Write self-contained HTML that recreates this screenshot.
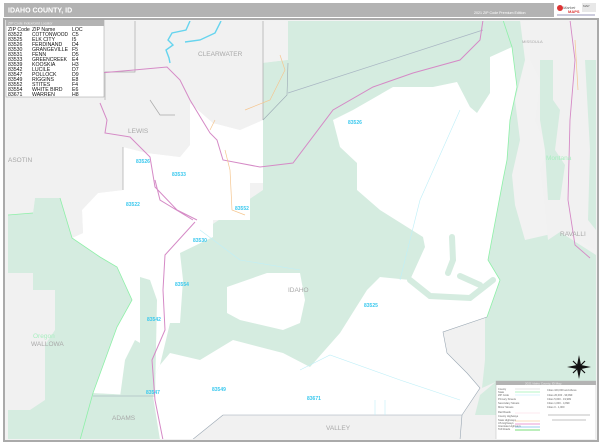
<!DOCTYPE html>
<html><head><meta charset="utf-8"><style>
html,body{margin:0;padding:0;background:#fff;}
body{width:600px;height:442px;overflow:hidden;position:relative;font-family:"Liberation Sans",sans-serif;}
svg{position:absolute;left:0;top:0;}
</style></head><body>
<svg width="600" height="442" viewBox="0 0 600 442" xmlns="http://www.w3.org/2000/svg" font-family="Liberation Sans, sans-serif">
<rect x="4" y="3" width="550" height="14" fill="#b3b3b3"/>
<text x="8" y="12.5" font-size="7" font-weight="bold" fill="#fff">IDAHO COUNTY, ID</text>
<text x="474" y="14" font-size="3.6" fill="#fff">2021 ZIP Code Premium Edition</text>
<g>
<circle cx="560" cy="8" r="3" fill="#d33"/>
<text x="563" y="9" font-size="4" fill="#666" font-style="italic">Market</text>
<text x="568" y="13" font-size="4" font-weight="bold" fill="#d33">MAPS</text>
<rect x="582" y="3" width="14" height="9" fill="#e8e8e8"/>
<text x="583" y="7" font-size="3" fill="#555">MAP</text>
<rect x="557" y="14" width="38" height="2" fill="#ccd"/>
</g>
<rect x="4" y="19" width="594" height="422" fill="#f2f2f2" stroke="#aaa" stroke-width="2"/>
<defs><clipPath id="c"><rect x="6" y="21" width="590" height="418"/></clipPath></defs>
<g clip-path="url(#c)">
<polygon fill="#d5ece0" points="263,63 288,60 288,20 520,20 525,60 515,100 520,140 512,175 515,205 525,240 560,232 596,255 596,415 480,415 462,415 300,415 150,415 120,397 90,396 80,440 8,440 8,215 33,213 35,198 60,198 72,238 100,257 117,267 132,300 117,327 93,393 153,396 160,260 263,190"/>
<polygon fill="#f1f1f1" points="530,20 596,20 596,250 575,238 560,232 548,240 545,210 540,170 548,150 535,120 540,80 530,60"/>
<polygon fill="#d5ece0" points="540,60 553,60 553,100 560,110 555,150 565,165 560,200 548,200 545,150 540,120"/>
<polygon fill="#d5ece0" points="585,60 596,60 596,230 588,220 590,150"/>
<polygon fill="#f1f1f1" points="8,273 33,273 33,290 55,290 55,330 45,345 45,400 30,410 8,410"/>
<polygon fill="#f1f1f1" points="485,318 443,332 447,353 467,373 480,388 460,405 460,415 300,415 300,440 596,440 596,415 475,415 480,395 498,380 500,360 490,340"/>
<polygon fill="#f1f1f1" points="443,332 485,318 495,340 485,360 480,388 467,373 447,353"/>
<polygon fill="#d5ece0" points="485,318 510,320 545,345 560,345 596,330 596,380 500,380 482,388 485,360"/>
<polygon fill="#fff" points="333,120 353,110 393,87 433,87 457,82 470,107 477,113 490,93 490,57 512,47 517,87 510,120 507,160 503,180 488,260 500,280 487,317 443,332 447,353 467,373 480,388 462,415 223,415 192,440 160,440 155,420 152,400 150,385 160,365 170,353 200,360 233,340 283,353 310,367 340,333 367,290 380,277 410,280 425,247 423,237 380,210 357,190 357,163 340,147"/>
<polygon fill="#f1f1f1" points="223,415 462,415 460,440 192,440"/>
<polygon fill="#fff" points="123,147 147,153 180,157 190,145 190,103 213,123 240,130 263,120 263,183 250,183 250,220 213,220 213,237 180,253 183,280 180,323 170,323 160,365 150,385 152,396 93,393 117,327 132,300 117,267 100,257 72,238 83,233 82,210 98,193 123,190"/>
<polygon fill="#fff" points="227,287 267,273 300,273 305,300 300,323 283,330 240,320 227,313"/>
<polygon fill="#d5ece0" points="140,277 150,280 157,300 155,397 147,397 140,350"/>
<polygon fill="#d5ece0" points="120,397 125,360 135,340 147,347 147,397"/>
<polygon fill="#d5ece0" points="80,396 153,396 160,440 80,440"/>
<path d="M452,237 L453,260 L448,273 M410,280 L430,296 L470,298 L493,280 M460,276 L480,285" stroke="#d5ece0" stroke-width="6" fill="none" stroke-linecap="round"/>
<polygon fill="#f1f1f1" points="6,21 263,21 263,63 263,120 240,130 213,123 190,103 190,145 180,157 147,153 123,147 123,190 98,193 82,210 83,233 72,238 60,198 35,198 33,213 8,215"/>
<polygon fill="#d5ece0" points="263,63 288,60 288,120 263,120"/>
<path d="M190,21 L186,30 L172,33 L168,40 L173,45 L166,50 L169,58 L170,63 M221,21 L215,33 L200,40 L185,42" stroke="#66d4ee" stroke-width="1.4" fill="none"/>
<path d="M263,20 L263,120 M123,147 L123,190 M45,20 L45,68 M135,20 L135,72 L105,72 L105,100 M150,100 L160,115 L175,115" stroke="#aaa" stroke-width="0.7" fill="none"/>
<path d="M288,93 L483,30" stroke="#a9b6c3" stroke-width="0.7"/>
<path d="M503,20 L512,47 L517,87 L510,120 L507,160 L503,180 L488,260 L500,280 L487,317 M60,198 L72,238 L100,257 L117,267 L132,300 L117,327 L93,393 L80,440 M8,215 L33,213" stroke="#8ef0a8" stroke-width="0.8" fill="none"/>
<path d="M93,396 L153,396 M223,415 L462,415 L460,440 M223,415 L192,440 M487,317 L443,332 L447,353 L467,373 L480,388 L462,415 M263,120 L287,95 L288,63" stroke="#9aa7b3" stroke-width="0.6" fill="none"/>
<path d="M460,110 L420,200 L400,280 M300,370 L330,355 L400,380 L460,400 M200,230 L240,260 L300,270 M375,400 L375,415 M385,400 L385,415" stroke="#bfeff8" stroke-width="0.6" fill="none"/>
<path d="M6,70 L100,73 L167,67 L180,80 L190,100 L210,133 L217,140 L223,160 L260,167 L293,163 L333,110 L373,87 L413,73 L460,60 L480,40 L483,20" stroke="#d58ac6" stroke-width="1" fill="none"/>
<path d="M100,103 L107,120 L105,133 L130,137 L150,157 L155,187 L177,210 L197,220 M155,180 L160,200 L193,220 M195,222 L165,255 L163,290 L165,330 L152,360 L155,400 L163,440" stroke="#d58ac6" stroke-width="1" fill="none"/>
<path d="M570,20 L575,60 L570,120 L568,200 L575,245 L590,258" stroke="#d58ac6" stroke-width="0.9" fill="none"/>
<path d="M215,120 L210,130 M280,55 L285,70 L270,100 L245,110 M225,150 L230,170 L232,210 L245,215 M575,40 L578,90" stroke="#f5c690" stroke-width="0.7" fill="none"/>
<g font-size="5" fill="#39c8ee" font-weight="bold">
<text x="348" y="124">83526</text>
<text x="136" y="163">83526</text>
<text x="172" y="176">83533</text>
<text x="126" y="206">83522</text>
<text x="235" y="210">83552</text>
<text x="193" y="242">83530</text>
<text x="175" y="286">83554</text>
<text x="147" y="321">83542</text>
<text x="146" y="394">83547</text>
<text x="212" y="391">83549</text>
<text x="364" y="307">83525</text>
<text x="307" y="400">83671</text>
</g>
<g font-size="6.5" fill="#a8a8a8">
<text x="198" y="56">CLEARWATER</text>
<text x="128" y="133">LEWIS</text>
<text x="8" y="162">ASOTIN</text>
<text x="288" y="292">IDAHO</text>
<text x="31" y="346">WALLOWA</text>
<text x="112" y="420">ADAMS</text>
<text x="326" y="430">VALLEY</text>
<text x="560" y="236">RAVALLI</text>
<text x="546" y="160" fill="#a8eec0">Montana</text>
<text x="33" y="338" fill="#a8eec0">Oregon</text>
<text x="522" y="43" font-size="4">MISSOULA</text>
</g>
<g transform="translate(579,367)">
<path d="M0,-12 L2,-2 L12,0 L2,2 L0,12 L-2,2 L-12,0 L-2,-2Z" fill="#111"/>
<path d="M-6,-6 L6,6 M6,-6 L-6,6" stroke="#111" stroke-width="1.2"/>
</g>
<rect x="496" y="381" width="100" height="59" fill="#fff" stroke="#bbb" stroke-width="0.5"/>
<rect x="496" y="381" width="100" height="4" fill="#b3b3b3"/>
<text x="525" y="384.5" font-size="3" fill="#eee">2021 Idaho County, ID Map</text>
<g font-size="2.6" fill="#666">
<text x="498" y="390">County</text><text x="498" y="393">State</text><text x="498" y="396">ZIP Code</text>
<text x="498" y="400">Primary Streets</text><text x="498" y="404">Secondary Streets</text><text x="498" y="408">Minor Streets</text>
<text x="498" y="413">Rail Roads</text><text x="498" y="417">County Highways</text><text x="498" y="421">State Highways</text>
<text x="498" y="424">US Highways</text><text x="498" y="427">Interstate Highways</text><text x="498" y="430">Toll Roads</text>
<text x="547" y="391">Cities 100,000 and Above</text><text x="547" y="396">Cities 20,000 - 99,999</text>
<text x="547" y="400">Cities 5,000 - 19,999</text><text x="547" y="404">Cities 1,000 - 4,999</text><text x="547" y="408">Cities 0 - 1,000</text>
</g>
<g stroke-width="0.8">
<line x1="515" y1="389" x2="540" y2="389" stroke="#ddd"/>
<line x1="515" y1="392" x2="540" y2="392" stroke="#9ef0b0"/>
<line x1="515" y1="395" x2="540" y2="395" stroke="#cdf3fb"/>
<line x1="515" y1="413" x2="540" y2="413" stroke="#fbe0ea"/>
<line x1="515" y1="421" x2="540" y2="421" stroke="#f8d3a6"/>
<line x1="515" y1="424" x2="540" y2="424" stroke="#e07cc6"/>
<line x1="515" y1="427" x2="540" y2="427" stroke="#7cbdea"/>
<line x1="515" y1="430" x2="540" y2="430" stroke="#4bd04b"/>
<line x1="548" y1="415" x2="590" y2="415" stroke="#666" stroke-width="0.4"/>
<line x1="552" y1="420" x2="586" y2="420" stroke="#666" stroke-width="0.4"/>
</g>
</g>
<rect x="6" y="20" width="98" height="77" fill="#fff" stroke="#999" stroke-width="0.5"/>
<rect x="6" y="20" width="98" height="6" fill="#b3b3b3"/>
<text x="8" y="24.5" font-size="3.5" fill="#eee">ZIP Code Index/Grid Locator</text>
<g font-size="5.2" fill="#111">
<text x="8" y="31">ZIP Code</text><text x="32" y="31">ZIP Name</text><text x="72" y="31">LOC</text>
<text x="8" y="36">83522</text><text x="32" y="36" textLength="36" lengthAdjust="spacingAndGlyphs">COTTONWOOD</text><text x="72" y="36">C5</text>
<text x="8" y="41">83525</text><text x="32" y="41">ELK CITY</text><text x="72" y="41">I5</text>
<text x="8" y="46">83526</text><text x="32" y="46">FERDINAND</text><text x="72" y="46">D4</text>
<text x="8" y="51">83530</text><text x="32" y="51" textLength="36" lengthAdjust="spacingAndGlyphs">GRANGEVILLE</text><text x="72" y="51">F5</text>
<text x="8" y="56">83531</text><text x="32" y="56">FENN</text><text x="72" y="56">D5</text>
<text x="8" y="61">83533</text><text x="32" y="61" textLength="35" lengthAdjust="spacingAndGlyphs">GREENCREEK</text><text x="72" y="61">E4</text>
<text x="8" y="66">83539</text><text x="32" y="66">KOOSKIA</text><text x="72" y="66">H3</text>
<text x="8" y="71">83542</text><text x="32" y="71">LUCILE</text><text x="72" y="71">D7</text>
<text x="8" y="76">83547</text><text x="32" y="76">POLLOCK</text><text x="72" y="76">D9</text>
<text x="8" y="81">83549</text><text x="32" y="81">RIGGINS</text><text x="72" y="81">E8</text>
<text x="8" y="86">83552</text><text x="32" y="86">STITES</text><text x="72" y="86">F4</text>
<text x="8" y="91">83554</text><text x="32" y="91">WHITE BIRD</text><text x="72" y="91">E6</text>
<text x="8" y="96">83671</text><text x="32" y="96">WARREN</text><text x="72" y="96">H8</text>
</g>
</svg>
</body></html>
